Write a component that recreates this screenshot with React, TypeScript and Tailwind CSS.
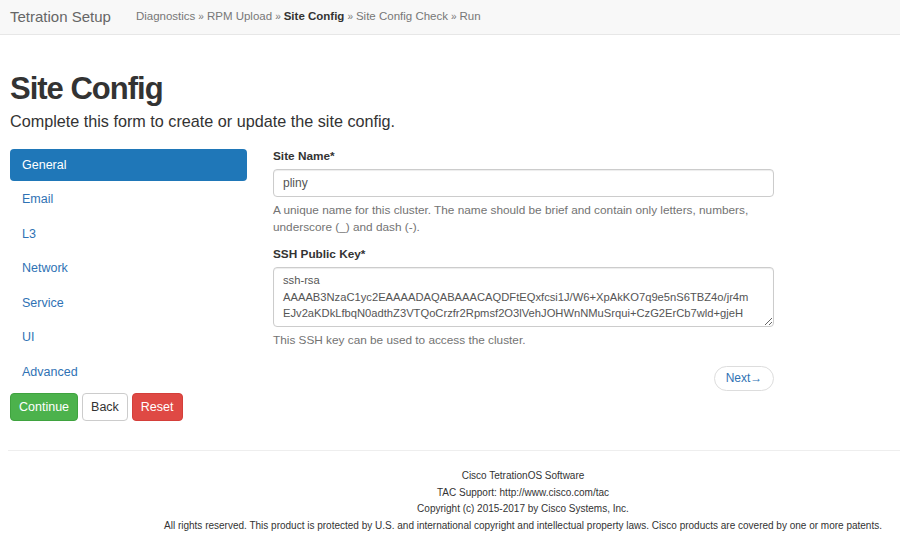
import React from "react";

const steps = ["Diagnostics", "RPM Upload", "Site Config", "Site Config Check", "Run"];
const tabs = ["General", "Email", "L3", "Network", "Service", "UI", "Advanced"];

const sshKey = [
  "ssh-rsa",
  "AAAAB3NzaC1yc2EAAAADAQABAAACAQDFtEQxfcsi1J/W6+XpAkKO7q9e5nS6TBZ4o/jr4m",
  "EJv2aKDkLfbqN0adthZ3VTQoCrzfr2Rpmsf2O3lVehJOHWnNMuSrqui+CzG2ErCb7wld+gjeH",
  "WskcZcogqkhQCdVBFvouB9soDqrwC6IPy5Yamc/lbV6GdGAhhVqhhKjMuX98GeloaplmQ",
  "Kq8ZtWb1rLmN3pQxYz7vF2hJ9sT4uE6wR0aD5cG8iO1kB3nM7lP",
].join("\n");

export default function App() {
  return (
    <div className="min-h-[545px] w-[900px] overflow-hidden bg-white font-['Liberation_Sans',Arial,sans-serif] text-[#333]">
      {/* top bar */}
      <nav className="flex h-[35px] items-center border-b border-[#e7e7e7] bg-[#f8f8f8] px-[10px]">
        <span className="text-[15px] text-[#666]">Tetration Setup</span>
        <div className="ml-[25px] text-[11.5px] text-[#777]">
          {steps.map((s, i) => (
            <span key={s}>
              {i > 0 && <span className="mx-[3px] text-[10px]">»</span>}
              <span className={s === "Site Config" ? "font-bold text-[#333]" : ""}>{s}</span>
            </span>
          ))}
        </div>
      </nav>

      <main className="px-[10px]">
        <h1 className="mt-[37px] text-[31px] leading-[34px] font-bold tracking-[-1px]">Site Config</h1>
        <p className="mt-[3px] text-[16.2px] leading-[24px]">
          Complete this form to create or update the site config.
        </p>

        <div className="mt-[16px] flex">
          {/* left tabs */}
          <div className="w-[237px]">
            <ul className="flex flex-col gap-[2.5px] text-[12.5px]">
              {tabs.map((t, i) => (
                <li
                  key={t}
                  className={
                    i === 0
                      ? "flex h-[32px] items-center rounded-[4px] bg-[#1f77b8] px-[12px] text-white"
                      : "flex h-[32px] items-center px-[12px] text-[#2f72b4]"
                  }
                >
                  {t}
                </li>
              ))}
            </ul>
            <div className="mt-[5px] flex gap-[4px] text-[12.5px]">
              <button className="h-[28px] rounded-[4px] border border-[#3fa33f] bg-[#4cb24c] px-[8px] text-white">
                Continue
              </button>
              <button className="h-[28px] rounded-[4px] border border-[#ccc] bg-white px-[8px] text-[#333]">
                Back
              </button>
              <button className="h-[28px] rounded-[4px] border border-[#d43f3a] bg-[#df4944] px-[8px] text-white">
                Reset
              </button>
            </div>
          </div>

          {/* form */}
          <div className="ml-[26px] w-[501px] text-[11.8px]">
            <label className="block font-bold leading-[15px]">Site Name*</label>
            <input
              readOnly
              value="pliny"
              className="mt-[5px] block h-[28px] w-full rounded-[4px] border border-[#ccc] px-[9px] text-[12px] text-[#555] shadow-[inset_0_1px_1px_rgba(0,0,0,0.075)] outline-none"
            />
            <p className="mt-[5px] leading-[16.5px] text-[#737373]">
              A unique name for this cluster. The name should be brief and contain only letters, numbers,
              underscore (_) and dash (-).
            </p>

            <label className="mt-[12px] block font-bold leading-[15px]">SSH Public Key*</label>
            <textarea
              readOnly
              wrap="off"
              value={sshKey}
              className="mt-[5px] block h-[60px] w-full overflow-hidden rounded-[4px] border border-[#ccc] px-[9px] pt-[4px] text-[11.2px] leading-[16.5px] text-[#555] shadow-[inset_0_1px_1px_rgba(0,0,0,0.075)] outline-none"
            />
            <p className="mt-[5px] leading-[16.5px] text-[#737373]">
              This SSH key can be used to access the cluster.
            </p>

            <div className="mt-[17px] flex justify-end">
              <button className="h-[25px] w-[60px] rounded-full border border-[#ddd] bg-white text-[12px] text-[#2f72b4]">
                Next→
              </button>
            </div>
          </div>
        </div>
      </main>

      {/* footer */}
      <footer className="mt-[29px] ml-[8px] border-t border-[#eee] pt-[17px] pb-[12px] pl-[138px]">
        <div className="flex flex-col items-center text-[10px] leading-[16.5px] whitespace-nowrap">
          <span>Cisco TetrationOS Software</span>
          <span>TAC Support: http://www.cisco.com/tac</span>
          <span>Copyright (c) 2015-2017 by Cisco Systems, Inc.</span>
          <span>
            All rights reserved. This product is protected by U.S. and international copyright and intellectual
            property laws. Cisco products are covered by one or more patents.
          </span>
        </div>
      </footer>
    </div>
  );
}
